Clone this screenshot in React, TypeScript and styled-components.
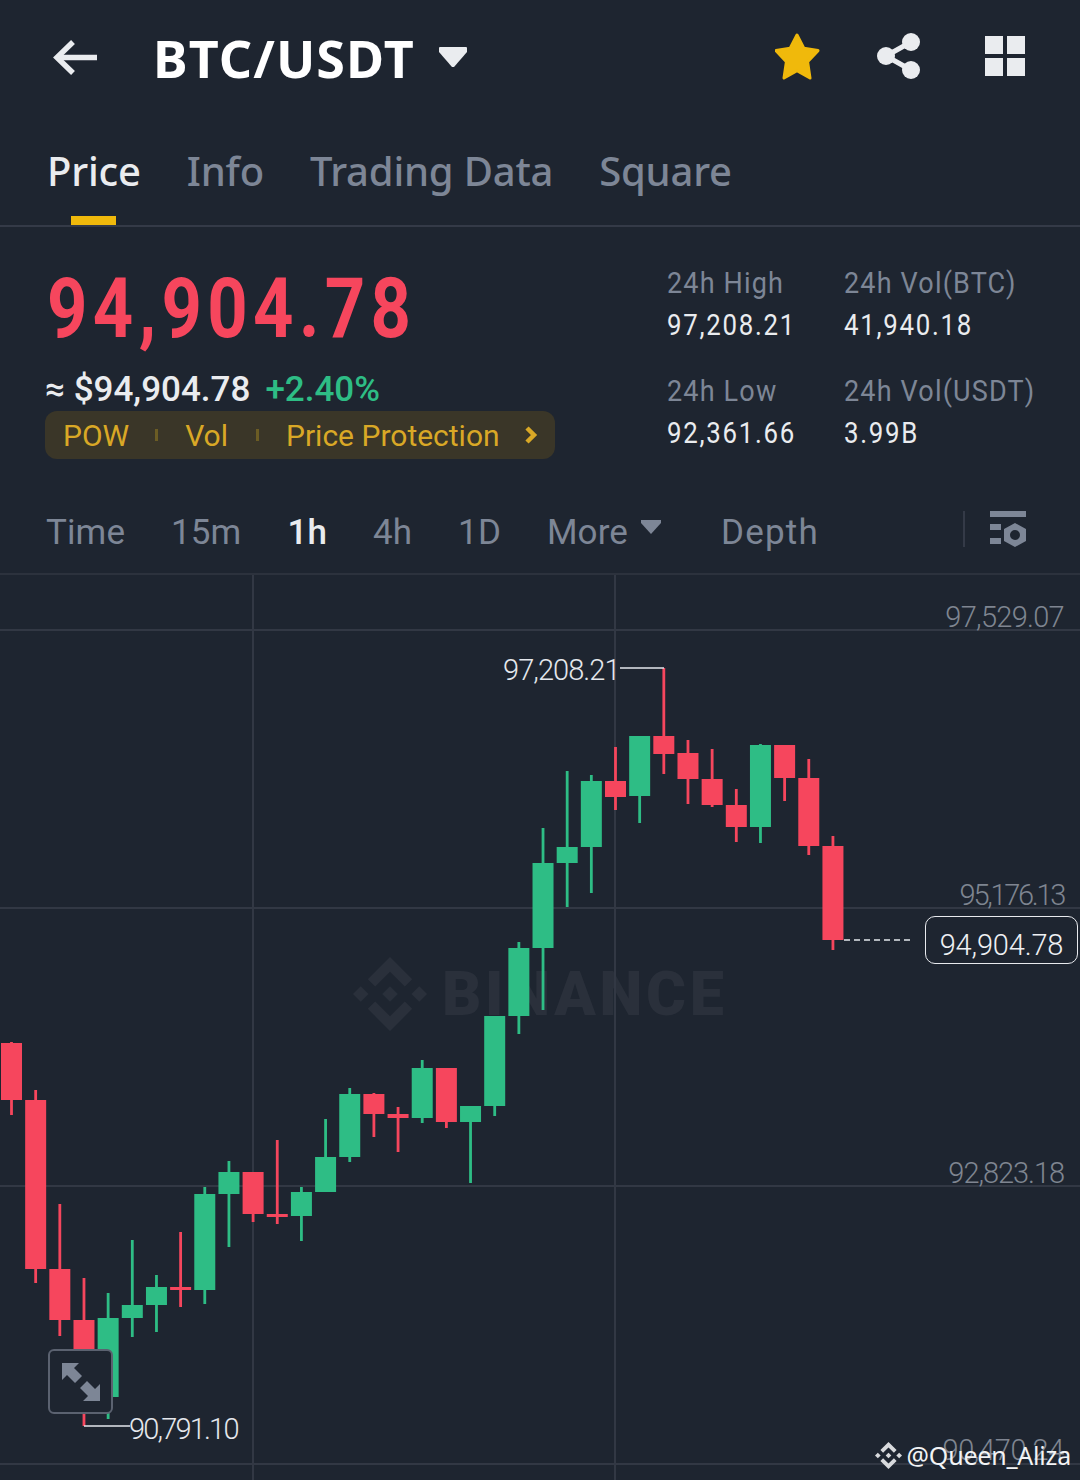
import React from "react";
import styled, { createGlobalStyle } from "styled-components";

const GlobalStyle = createGlobalStyle`
  html, body {
    margin: 0;
    padding: 0;
    background: #1e2530;
  }
`;

const Page = styled.div`
  width: 1080px;
  height: 1480px;
  overflow: hidden;
  background: #1e2530;
  font-family: "Noto Sans", sans-serif;
  color: #eaecef;
`;

const Header = styled.header`
  height: 116px;
  display: flex;
  align-items: center;
  padding: 0 55px 0 53px;
  box-sizing: border-box;
`;

const BackButton = styled.svg`
  width: 44px;
  height: 36px;
  margin-right: 56px;
`;

const Title = styled.h1`
  margin: 0;
  font-size: 52px;
  font-weight: 700;
  line-height: 116px;
  color: #ffffff;
  letter-spacing: 1.1px;
`;

const TitleCaret = styled.svg`
  width: 28px;
  height: 20px;
  margin: 0 0 2px 24px;
`;

const HeaderActions = styled.div`
  margin-left: auto;
  margin-bottom: 4px;
  display: flex;
  align-items: center;
  gap: 56px;
`;

const ShareIcon = styled.svg`
  width: 44px;
  height: 46px;
  margin-right: 8px;
`;

const TabBar = styled.nav`
  height: 109px;
  display: flex;
  gap: 46px;
  padding: 0 0 0 47px;
  border-bottom: 2px solid #343a47;
  box-sizing: content-box;
`;

const Tab = styled.div<{ $active?: boolean }>`
  position: relative;
  font-size: 40px;
  font-weight: 500;
  line-height: 110px;
  letter-spacing: -0.2px;
  color: ${(p) => (p.$active ? "#eaecef" : "#7d8696")};

  ${(p) =>
    p.$active &&
    `
    &::after {
      content: "";
      position: absolute;
      left: 24px;
      bottom: 0;
      width: 45px;
      height: 9px;
      background: #f0b90b;
    }
  `}
`;

const Stats = styled.section`
  height: 268px;
  padding: 0 0 0 46px;
  display: flex;
  box-sizing: border-box;
`;

const StatsLeft = styled.div`
  width: 621px;
  padding-top: 38px;
  box-sizing: border-box;
`;

const BigPrice = styled.div`
  font-family: Roboto, sans-serif;
  font-size: 83px;
  font-weight: 700;
  line-height: 88px;
  letter-spacing: 6.3px;
  color: #f6465d;
  margin-left: 1px;
  transform: scaleX(0.85);
  transform-origin: left center;
  white-space: nowrap;
`;

const FiatRow = styled.div`
  display: flex;
  gap: 15px;
  margin: 15px 0 0 -1px;
  font-family: Roboto, sans-serif;
  font-size: 35px;
  font-weight: 500;
  line-height: 44px;
  height: 43px;
`;

const Fiat = styled.span`
  color: #eaecef;
`;

const Change = styled.span`
  color: #2ebd85;
`;

const TagPill = styled.div`
  width: 510px;
  height: 48px;
  margin-left: -1px;
  padding-left: 18px;
  display: flex;
  align-items: center;
  background: #3a3628;
  border-radius: 12px;
  box-sizing: border-box;
  color: #d9a826;
  font-size: 30px;
  font-family: Roboto, sans-serif;
`;

const TagSep = styled.span<{ $left: number; $right: number }>`
  width: 3px;
  height: 12px;
  background: #6b5c24;
  margin: 0 ${(p) => p.$right}px 0 ${(p) => p.$left}px;
`;

const TagChevron = styled.svg`
  width: 14px;
  height: 18px;
  margin-left: 24px;
`;

const StatsGrid = styled.div`
  display: grid;
  grid-template-columns: 177px 1fr;
  grid-auto-rows: 108px;
  padding-top: 35px;
  font-family: Roboto, sans-serif;
`;

const StatCell = styled.div`
  display: flex;
  flex-direction: column;
`;

const StatLabel = styled.span`
  font-size: 30px;
  line-height: 42px;
  color: #7d8696;
  letter-spacing: 1.3px;
  white-space: nowrap;
  transform: scaleX(0.9);
  transform-origin: left center;
`;

const StatValue = styled.span`
  font-size: 30px;
  line-height: 41px;
  color: #eaecef;
  letter-spacing: 2px;
  white-space: nowrap;
  transform: scaleX(0.86);
  transform-origin: left center;
`;

const IntervalBar = styled.div`
  height: 82px;
  padding: 4px 54px 0 46px;
  display: flex;
  align-items: center;
  gap: 46px;
  border-bottom: 2px solid #2c323d;
  box-sizing: content-box;
  font-family: Roboto, sans-serif;
  margin-top: -8px;
`;

const Interval = styled.span<{ $active?: boolean }>`
  font-size: 35px;
  letter-spacing: 0.1px;
  font-weight: ${(p) => (p.$active ? 500 : 400)};
  color: ${(p) => (p.$active ? "#eaecef" : "#7d8696")};
`;

const MoreItem = styled(Interval)`
  display: flex;
  align-items: center;
  gap: 13px;
`;

const MoreCaret = styled.svg`
  width: 20px;
  height: 14px;
  margin-bottom: 10px;
`;

const DepthItem = styled(Interval)`
  margin-left: 14px;
  letter-spacing: 1.2px;
`;

const IntervalTools = styled.div`
  margin-left: auto;
  margin-bottom: 6px;
  display: flex;
  align-items: center;
  gap: 25px;
`;

const ToolSep = styled.span`
  width: 2px;
  height: 36px;
  background: #343a47;
`;

const Chart = styled.div`
  position: relative;
  height: 905px;
  overflow: hidden;
`;

const ChartCanvas = styled.svg`
  position: absolute;
  inset: 0;
  width: 1080px;
  height: 905px;
`;

const Watermark = styled.div`
  position: absolute;
  left: 353px;
  top: 382px;
  display: flex;
  align-items: center;
  gap: 15px;
  color: #2a303b;
  font-family: Roboto, sans-serif;
  font-size: 61px;
  font-weight: 900;
  letter-spacing: 3.7px;
  line-height: 74px;
`;

const AxisLabel = styled.span<{ $top: number; $tracking: number }>`
  position: absolute;
  right: 16px;
  top: ${(p) => p.$top}px;
  font-family: Roboto, sans-serif;
  font-weight: 300;
  font-size: 29px;
  line-height: 32px;
  letter-spacing: ${(p) => p.$tracking}px;
  color: #7f8591;
`;

const ExtremeLabel = styled.span<{ $top: number; $left: number; $tracking: number }>`
  position: absolute;
  left: ${(p) => p.$left}px;
  top: ${(p) => p.$top}px;
  font-family: Roboto, sans-serif;
  font-weight: 300;
  font-size: 29px;
  line-height: 32px;
  letter-spacing: ${(p) => p.$tracking}px;
  color: #e4e7ec;
`;

const LastPriceTag = styled.div`
  position: absolute;
  left: 925px;
  top: 341px;
  width: 153px;
  height: 48px;
  border: 1.5px solid #e8eaee;
  border-radius: 10px;
  box-sizing: border-box;
  text-align: center;
  font-family: Roboto, sans-serif;
  font-weight: 300;
  font-size: 29px;
  line-height: 57px;
  letter-spacing: -0.17px;
  color: #eef0f3;
`;

const ExpandButton = styled.div`
  position: absolute;
  left: 48px;
  top: 774px;
  width: 65px;
  height: 65px;
  display: flex;
  align-items: center;
  justify-content: center;
  background: #1e2530;
  border: 2px solid #5b6270;
  border-radius: 6px;
  box-sizing: border-box;
`;

const Credit = styled.div`
  position: absolute;
  right: 9px;
  bottom: 7px;
  display: flex;
  align-items: center;
  gap: 5px;
  font-size: 25px;
  line-height: 36px;
  letter-spacing: -0.2px;
  color: #f2f3f5;
`;

type Candle = [number, number, number, number, boolean];

// body top, body bottom, wick top, wick bottom, up
const candles: Candle[] = [
  [1043, 1100, 1042, 1115, false],
  [1100, 1269, 1090, 1283, false],
  [1269, 1320, 1204, 1336, false],
  [1320, 1397, 1278, 1426, false],
  [1318, 1397, 1293, 1419, true],
  [1305, 1318, 1240, 1337, true],
  [1287, 1305, 1275, 1332, true],
  [1287, 1290, 1232, 1307, false],
  [1194, 1290, 1187, 1304, true],
  [1172, 1194, 1161, 1247, true],
  [1172, 1214, 1172, 1222, false],
  [1214, 1217, 1140, 1224, false],
  [1192, 1216, 1187, 1241, true],
  [1157, 1192, 1119, 1192, true],
  [1094, 1157, 1088, 1162, true],
  [1094, 1114, 1093, 1137, false],
  [1114, 1118, 1107, 1152, false],
  [1068, 1118, 1060, 1123, true],
  [1068, 1122, 1068, 1128, false],
  [1106, 1122, 1106, 1183, true],
  [1016, 1106, 1016, 1116, true],
  [948, 1016, 942, 1034, true],
  [863, 948, 828, 1010, true],
  [847, 863, 771, 907, true],
  [781, 847, 775, 893, true],
  [781, 797, 747, 810, false],
  [736, 796, 736, 823, true],
  [736, 754, 668, 774, false],
  [753, 779, 740, 804, false],
  [779, 805, 749, 807, false],
  [805, 827, 789, 842, false],
  [745, 827, 744, 843, true],
  [745, 778, 745, 801, false],
  [778, 846, 759, 855, false],
  [846, 940, 836, 950, false],
];

const UP = "#2ebd85";
const DOWN = "#f6465d";
const GRID = "#323844";

const BinanceMark: React.FC<{ size: number; color: string }> = ({ size, color }) => (
  <svg width={size} height={size} viewBox="0 0 100 100" fill={color}>
    <polygon points="50,0 80,30 70,40 50,20 30,40 20,30" />
    <polygon points="50,100 80,70 70,60 50,80 30,60 20,70" />
    <polygon points="50,39.5 60.5,50 50,60.5 39.5,50" />
    <polygon points="10.5,39.5 21,50 10.5,60.5 0,50" />
    <polygon points="89.5,39.5 100,50 89.5,60.5 79,50" />
  </svg>
);

const App: React.FC = () => {
  return (
    <Page>
      <GlobalStyle />
      <Header>
        <BackButton viewBox="0 0 44 36" fill="none" stroke="#eaecef" strokeWidth="5.5">
          <path d="M44 17.5H4" />
          <path d="M20 2L4 17.5L20 33" />
        </BackButton>
        <Title>BTC/USDT</Title>
        <TitleCaret viewBox="0 0 28 20" fill="#eaecef">
          <path d="M1 0H27Q28 0 28 1V5L15 20H13L0 5V1Q0 0 1 0Z" />
        </TitleCaret>
        <HeaderActions>
          <svg width="46" height="47" viewBox="0 0 46 47" fill="#f0b90b">
            <path
              d="M22 2L28.8 15.2L43 17.6L32.6 28.6L35 45L22 37.8L9 45L11.4 28.6L1 17.6L15.2 15.2Z"
              stroke="#f0b90b"
              strokeWidth="3"
              strokeLinejoin="round"
            />
          </svg>
          <ShareIcon viewBox="0 0 44 46">
            <g fill="#eaecef">
              <circle cx="9" cy="23" r="9" />
              <circle cx="34" cy="9" r="9" />
              <circle cx="34" cy="37" r="9" />
            </g>
            <path d="M9 23L34 9M9 23L34 37" stroke="#eaecef" strokeWidth="5" />
          </ShareIcon>
          <svg width="40" height="40" viewBox="0 0 40 40" fill="#eaecef">
            <rect x="0" y="0" width="18" height="18" />
            <rect x="22" y="0" width="18" height="18" />
            <rect x="0" y="22" width="18" height="18" />
            <rect x="22" y="22" width="18" height="18" />
          </svg>
        </HeaderActions>
      </Header>

      <TabBar>
        <Tab $active>Price</Tab>
        <Tab>Info</Tab>
        <Tab>Trading Data</Tab>
        <Tab>Square</Tab>
      </TabBar>

      <Stats>
        <StatsLeft>
          <BigPrice>94,904.78</BigPrice>
          <FiatRow>
            <Fiat>≈ $94,904.78</Fiat>
            <Change>+2.40%</Change>
          </FiatRow>
          <TagPill>
            POW
            <TagSep $left={26} $right={27} />
            Vol
            <TagSep $left={28} $right={27} />
            Price Protection
            <TagChevron viewBox="0 0 14 18" fill="none" stroke="#d9a826" strokeWidth="4.5">
              <path d="M3 2L10 9L3 16" />
            </TagChevron>
          </TagPill>
        </StatsLeft>
        <StatsGrid>
          <StatCell>
            <StatLabel>24h High</StatLabel>
            <StatValue>97,208.21</StatValue>
          </StatCell>
          <StatCell>
            <StatLabel>24h Vol(BTC)</StatLabel>
            <StatValue>41,940.18</StatValue>
          </StatCell>
          <StatCell>
            <StatLabel>24h Low</StatLabel>
            <StatValue>92,361.66</StatValue>
          </StatCell>
          <StatCell>
            <StatLabel>24h Vol(USDT)</StatLabel>
            <StatValue>3.99B</StatValue>
          </StatCell>
        </StatsGrid>
      </Stats>

      <IntervalBar>
        <Interval>Time</Interval>
        <Interval>15m</Interval>
        <Interval $active>1h</Interval>
        <Interval>4h</Interval>
        <Interval>1D</Interval>
        <MoreItem>
          More
          <MoreCaret viewBox="0 0 20 14" fill="#7d8696">
            <path d="M0 0H20V3L10 14L0 3Z" />
          </MoreCaret>
        </MoreItem>
        <DepthItem>Depth</DepthItem>
        <IntervalTools>
          <ToolSep />
          <svg width="36" height="36" viewBox="0 0 36 36" fill="#7d8696">
            <rect x="0" y="0" width="36" height="6" />
            <rect x="0" y="13" width="11" height="6" />
            <rect x="0" y="27" width="11" height="6" />
            <path
              fillRule="evenodd"
              d="M25 12L36 18V30L25 36L14 30V18ZM25 19A5 5 0 1 0 25 29A5 5 0 1 0 25 19Z"
            />
          </svg>
        </IntervalTools>
      </IntervalBar>

      <Chart>
        <Watermark>
          <BinanceMark size={74} color="#2a303b" />
          BINANCE
        </Watermark>

        <ChartCanvas viewBox="0 575 1080 905">
          <g stroke={GRID} strokeWidth="2">
            <path d="M0 630H1080M0 908H1080M0 1186H1080M0 1464H1080" />
            <path d="M253 575V1480M615 575V1480" />
          </g>
          {candles.map(([top, bottom, wickTop, wickBottom, up], i) => {
            const x = 11.5 + i * 24.16;
            const color = up ? UP : DOWN;
            return (
              <g key={i} fill={color}>
                <rect x={x - 1.4} y={wickTop} width="2.8" height={wickBottom - wickTop} />
                <rect x={x - 10.5} y={top} width="21" height={bottom - top} />
              </g>
            );
          })}
          <g stroke="#e4e7ec" strokeWidth="1.5" fill="none">
            <path d="M620 668H664" />
            <path d="M84 1426H130" />
            <path d="M844 940H910" strokeDasharray="6 4" />
          </g>
        </ChartCanvas>

        <AxisLabel $top={26} $tracking={-0.72}>97,529.07</AxisLabel>
        <AxisLabel $top={304} $tracking={-2.3}>95,176.13</AxisLabel>
        <AxisLabel $top={582} $tracking={-1.05}>92,823.18</AxisLabel>
        <AxisLabel $top={859} $tracking={-0.4}>90,470.24</AxisLabel>

        <ExtremeLabel $left={503} $top={79} $tracking={-0.95}>97,208.21</ExtremeLabel>
        <ExtremeLabel $left={129} $top={838} $tracking={-1.83}>90,791.10</ExtremeLabel>

        <LastPriceTag>94,904.78</LastPriceTag>

        <ExpandButton>
          <svg width="38" height="38" viewBox="0 0 38 38" fill="#7d8696">
            <path d="M0 0H17L12 5L20 13L13 20L5 12L0 17Z" />
            <path d="M38 38H21L26 33L18 25L25 18L33 26L38 21Z" />
          </svg>
        </ExpandButton>

        <Credit>
          <BinanceMark size={27} color="#d8dadd" />
          @Queen_Aliza
        </Credit>
      </Chart>
    </Page>
  );
};

export default App;
